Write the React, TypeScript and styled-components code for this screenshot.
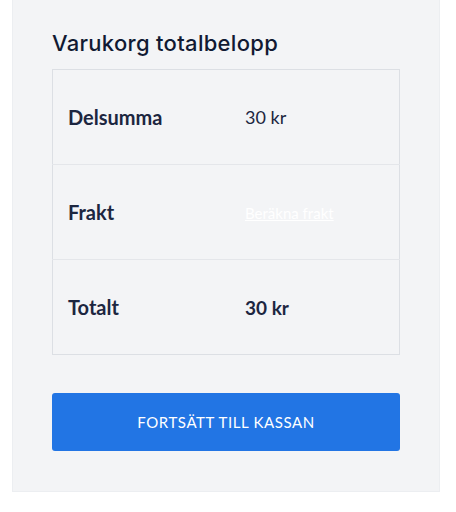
import * as React from "react";
import styled, { createGlobalStyle } from "styled-components";

const GlobalStyle = createGlobalStyle`
  body {
    margin: 0;
    background: #ffffff;
    font-family: Lato, "Noto Sans", sans-serif;
  }
`;

const Page = styled.div`
  padding: 0 16px 22px 12px;
`;

const Panel = styled.div`
  background-color: #f3f4f6;
  border: 1px solid #eceef1;
  border-top: none;
  padding: 28px 39px 40px 39px;
`;

const Title = styled.h2`
  margin: 0 0 11px 0;
  font-family: Inter, "Open Sans", sans-serif;
  font-weight: 500;
  font-size: 22px;
  line-height: 30px;
  color: #111a33;
  letter-spacing: 0.3px;
`;

const Totals = styled.table`
  width: 100%;
  border-collapse: collapse;
  border: 1px solid #dcdfe4;
`;

const Row = styled.tr`
  border-top: 1px solid #e4e6ea;
  &:first-child {
    border-top: none;
  }
`;

const Label = styled.th`
  width: 161px;
  height: 94px;
  padding: 0 0 0 15px;
  text-align: left;
  font-family: Lato, sans-serif;
  font-weight: 700;
  font-size: 20px;
  color: #1c2640;
`;

const Value = styled.td<{ $strong?: boolean }>`
  padding: 0 16px;
  font-family: Lato, sans-serif;
  font-size: ${p => (p.$strong ? 19 : 18)}px;
  font-weight: ${p => (p.$strong ? 700 : 400)};
  color: #1c2640;
`;

const CalcLink = styled.a`
  font-family: Lato, sans-serif;
  font-size: 15px;
  color: #ffffff;
  text-decoration: underline;
`;

const CheckoutButton = styled.button`
  display: block;
  width: 100%;
  height: 58px;
  margin-top: 38px;
  border: none;
  border-radius: 3px;
  background-color: #2275e4;
  color: #ffffff;
  font-family: Lato, sans-serif;
  font-size: 15px;
  letter-spacing: 0.6px;
  cursor: pointer;
`;

export default function App() {
  return (
    <Page>
      <GlobalStyle />
      <Panel>
        <Title>Varukorg totalbelopp</Title>
        <Totals>
          <tbody>
            <Row>
              <Label>Delsumma</Label>
              <Value>30 kr</Value>
            </Row>
            <Row>
              <Label>Frakt</Label>
              <Value>
                <CalcLink href="#">Beräkna frakt</CalcLink>
              </Value>
            </Row>
            <Row>
              <Label>Totalt</Label>
              <Value $strong>30 kr</Value>
            </Row>
          </tbody>
        </Totals>
        <CheckoutButton>FORTSÄTT TILL KASSAN</CheckoutButton>
      </Panel>
    </Page>
  );
}
